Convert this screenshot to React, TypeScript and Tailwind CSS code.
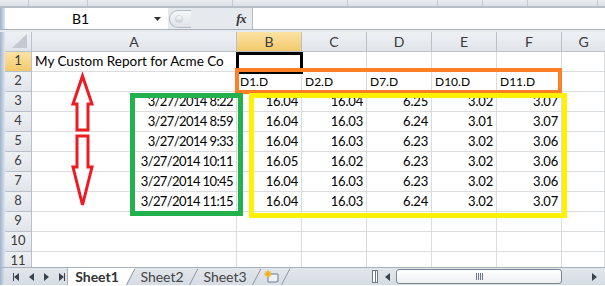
import React from 'react';

const cols = ['B', 'C', 'D', 'E', 'F'];
const heads = ['D1.D', 'D2.D', 'D7.D', 'D10.D', 'D11.D'];
const dates = ['8:22', '8:59', '9:33', '10:11', '10:45', '11:15'];
const values = [
  ['16.04', '16.04', '6.25', '3.02', '3.07'],
  ['16.04', '16.03', '6.24', '3.01', '3.07'],
  ['16.04', '16.03', '6.23', '3.02', '3.06'],
  ['16.05', '16.02', '6.23', '3.02', '3.06'],
  ['16.04', '16.03', '6.23', '3.02', '3.06'],
  ['16.04', '16.03', '6.24', '3.02', '3.07'],
];
const ribbonStops = ['w-[29px]', 'w-[59px]', 'w-[145px]', 'w-[115px]', 'w-[90px]', 'w-[45px]', 'w-[45px]', 'w-[70px]'];

function RowHead({ n, active }: { n: number; active?: boolean }) {
  return (
    <div
      className={`w-[27px] shrink-0 flex items-end justify-center pb-[4px] leading-none text-[13px] text-[#3a3a3a] border-r border-b border-[#b9c0ca] ${
        active ? 'bg-gradient-to-b from-[#fbe3a4] to-[#f4c96a]' : 'bg-gradient-to-b from-[#eef1f4] to-[#e1e5ea]'
      }`}
    >
      {n}
    </div>
  );
}

function Cell({ w, children, align = 'left', kind = 'text' }: { w: string; children?: React.ReactNode; align?: 'left' | 'right'; kind?: 'text' | 'head' | 'num' | 'date' }) {
  const size =
    kind === 'head'
      ? 'text-[12px]'
      : kind === 'num'
      ? 'text-[13px] tracking-[-0.2px]'
      : kind === 'date'
      ? 'text-[13px] tracking-[-0.6px]'
      : 'text-[13.5px]';
  return (
    <div
      className={`${w} shrink-0 h-full border-r border-b border-[#dadcdd] flex items-end pb-[3px] leading-none whitespace-nowrap overflow-visible ${
        align === 'right' ? 'justify-end pr-[3px]' : 'pl-[3px]'
      } ${size} text-black`}
    >
      {children}
    </div>
  );
}

function Row({ n, a, date, b, head, active }: { n: number; a?: string; date?: boolean; b?: string[]; head?: boolean; active?: boolean }) {
  return (
    <div className="flex h-[20px] shrink-0">
      <RowHead n={n} active={active} />
      <Cell w="w-[205px]" align={date ? 'right' : 'left'} kind={date ? 'date' : 'text'}>
        {a}
      </Cell>
      {cols.map((c, i) => (
        <Cell key={c} w="w-[65px]" align={head ? 'left' : 'right'} kind={head ? 'head' : 'num'}>
          {b?.[i]}
        </Cell>
      ))}
      <Cell w="w-[43px]" />
    </div>
  );
}

function Tri({ dir }: { dir: 'l' | 'r' }) {
  return (
    <svg width="5" height="8" viewBox="0 0 5 8" className="shrink-0">
      <path d={dir === 'l' ? 'M5 0 L0 4 L5 8 Z' : 'M0 0 L5 4 L0 8 Z'} fill="#3a424c" />
    </svg>
  );
}

function Slant({ w = 9, fill }: { w?: number; fill?: boolean }) {
  return (
    <svg width={w} height="17" viewBox={`0 0 ${w} 17`} className="shrink-0 block">
      {fill && <path d="M0 0 V17 L9 0 Z" fill="#fff" />}
      <path d="M0.5 17 L9 0.5" stroke="#8d96a1" fill="none" />
    </svg>
  );
}

export default function App() {
  return (
    <div className="relative w-[605px] h-[286px] overflow-hidden bg-white font-['Lato',sans-serif] select-none">
      {/* ribbon edge */}
      <div className="flex h-[8px] bg-gradient-to-b from-[#e9ecf0] to-[#dce1e7] border-b-2 border-[#b8bec7]">
        {ribbonStops.map((w, i) => (
          <div key={i} className={`${w} shrink-0 border-r border-[#c3c9d1]`} />
        ))}
      </div>

      {/* formula bar */}
      <div className="flex h-[22px] bg-[#e6e9ee] border-b border-[#a9b1bc]">
        <div className="w-[5px] shrink-0 bg-gradient-to-r from-[#9fb3cc] to-[#dfe6ee]" />
        <div className="w-[163px] shrink-0 bg-white flex items-center">
          <span className="flex-1 text-center text-[14px] text-black pl-[2px]">B1</span>
          <svg className="mr-[7px]" width="7" height="4" viewBox="0 0 7 4">
            <path d="M0 0 H7 L3.5 4 Z" fill="#333" />
          </svg>
        </div>
        <div className="w-[84px] shrink-0 flex items-center">
          <div className="ml-[1px] w-[22px] h-[18px] rounded-l-full border border-r-0 border-[#b5bcc6] bg-gradient-to-b from-[#f5f6f8] to-[#dfe3e8] flex items-center pl-[5px]">
            <div className="w-[8px] h-[8px] rounded-full bg-gradient-to-b from-[#ffffff] to-[#c9ced5] border border-[#d0d5dc]" />
          </div>
          <div className="flex-1" />
          <span className="font-['Liberation_Serif',serif] italic font-bold text-[13px] text-[#333] mr-[6px] tracking-[-0.5px]">fx</span>
        </div>
        <div className="flex-1 bg-white border-l border-[#b5bcc6]" />
      </div>
      <div className="h-[2px] bg-[#e6e9ee]" />

      {/* grid */}
      <div className="flex h-[235px] overflow-hidden">
        <div className="w-[5px] shrink-0 bg-gradient-to-r from-[#9fb3cc] to-[#dfe6ee]" />
        <div className="flex flex-col">
          <div className="flex h-[20px] shrink-0 text-[14px] text-[#3a3a3a]">
            <div className="w-[27px] shrink-0 border-r border-b border-[#b9c0ca] bg-gradient-to-b from-[#eef1f4] to-[#e1e5ea] flex items-end justify-end pr-[4px] pb-[3px]">
              <svg width="15" height="14" viewBox="0 0 15 14">
                <path d="M15 0 V14 H0 Z" fill="#c4c9cf" />
              </svg>
            </div>
            <div className="w-[205px] shrink-0 border-r border-b border-[#b9c0ca] bg-gradient-to-b from-[#eef1f4] to-[#e1e5ea] flex items-center justify-center">A</div>
            {cols.map((c) => (
              <div
                key={c}
                className={`w-[65px] shrink-0 border-r border-b border-[#b9c0ca] flex items-center justify-center ${
                  c === 'B' ? 'bg-gradient-to-b from-[#fbe3a4] to-[#f4c96a]' : 'bg-gradient-to-b from-[#eef1f4] to-[#e1e5ea]'
                }`}
              >
                {c}
              </div>
            ))}
            <div className="w-[43px] shrink-0 border-b border-[#b9c0ca] bg-gradient-to-b from-[#eef1f4] to-[#e1e5ea] flex items-center justify-center">G</div>
          </div>
          <Row n={1} a="My Custom Report for Acme Co" active />
          <Row n={2} b={heads} head />
          {dates.map((t, i) => (
            <Row key={t} n={i + 3} a={`3/27/2014 ${t}`} date b={values[i]} />
          ))}
          <Row n={9} />
          <Row n={10} />
          <Row n={11} />
        </div>
      </div>

      {/* sheet tabs + scrollbar */}
      <div className="flex w-[605px] h-[18px] bg-gradient-to-b from-[#e3e7ec] to-[#d6dce3] border-t border-[#a9b1bc] text-[14px] text-[#444]">
        <div className="w-[5px] shrink-0 bg-gradient-to-r from-[#9fb3cc] to-[#dfe6ee]" />
        <div className="w-[295px] shrink-0 flex items-stretch">
          <div className="w-[63px] shrink-0 flex items-center gap-[10px] pl-[8px] border-r border-[#a9b1bc]">
            <span className="flex items-center"><span className="w-[1px] h-[8px] bg-[#3a424c]" /><Tri dir="l" /></span>
            <Tri dir="l" />
            <Tri dir="r" />
            <span className="flex items-center"><Tri dir="r" /><span className="w-[1px] h-[8px] bg-[#3a424c]" /></span>
          </div>
          <div className="w-[58px] shrink-0 bg-white flex items-center justify-center font-bold text-[#333]">Sheet1</div>
          <Slant fill />
          <div className="w-[54px] shrink-0 flex items-center justify-center">Sheet2</div>
          <Slant />
          <div className="w-[54px] shrink-0 flex items-center justify-center">Sheet3</div>
          <Slant />
          <div className="w-[20px] shrink-0 flex items-center justify-center">
            <svg width="15" height="13" viewBox="0 0 15 13">
              <path d="M4 4 H14 V11 L12 12 H4 Z" fill="#eef2f7" stroke="#6b7c95" />
              <circle cx="4" cy="4" r="3" fill="#f5c542" />
              <path d="M4 0 V8 M0 4 H8 M1.5 1.5 L6.5 6.5 M6.5 1.5 L1.5 6.5" stroke="#e9a91a" strokeWidth="0.8" />
            </svg>
          </div>
          <Slant w={12} />
        </div>
        <div className="w-[305px] shrink-0 flex items-center">
          <div className="w-[72px] shrink-0" />
          <div className="w-[6px] h-[13px] shrink-0 border border-[#6f7a88] bg-white flex justify-center">
            <span className="w-[1px] h-full bg-[#6f7a88]" />
          </div>
          <div className="w-[18px] shrink-0 flex items-center justify-center">
            <Tri dir="l" />
          </div>
          <div className="w-[166px] h-[15px] shrink-0 rounded-[3px] border border-[#7b8694] bg-gradient-to-b from-[#ffffff] to-[#eceff3] flex items-center justify-center gap-[1px]">
            {[0, 1, 2, 3].map((i) => (
              <span key={i} className="w-[1px] h-[7px] bg-[#6d7783]" />
            ))}
          </div>
          <div className="w-[43px] shrink-0 flex items-center justify-end pr-[8px]">
            <Tri dir="r" />
          </div>
        </div>
      </div>

      {/* annotations drawn over the sheet */}
      <div className="absolute left-[236px] top-[52px] w-[67px] h-[22px] border-[3px] border-black" />
      <div className="absolute left-[235px] top-[68px] w-[327px] h-[26px] border-[4px] border-[#ff7f27]" />
      <div className="absolute left-[130px] top-[93px] w-[113px] h-[123px] border-[5px] border-[#22b14c]" />
      <div className="absolute left-[249px] top-[93px] w-[318px] h-[125px] border-[5px] border-[#fff200]" />
      <svg className="absolute left-0 top-0" width="605" height="286" viewBox="0 0 605 286">
        <path d="M82.5 76 L92 104 H88 V130 H77 V104 H73 Z" fill="#fff" stroke="#ed1c24" strokeWidth="3" />
        <path d="M77 136 H88 V167 H92 L82.5 205 L73 167 H77 Z" fill="#fff" stroke="#ed1c24" strokeWidth="3" />
      </svg>
    </div>
  );
}
